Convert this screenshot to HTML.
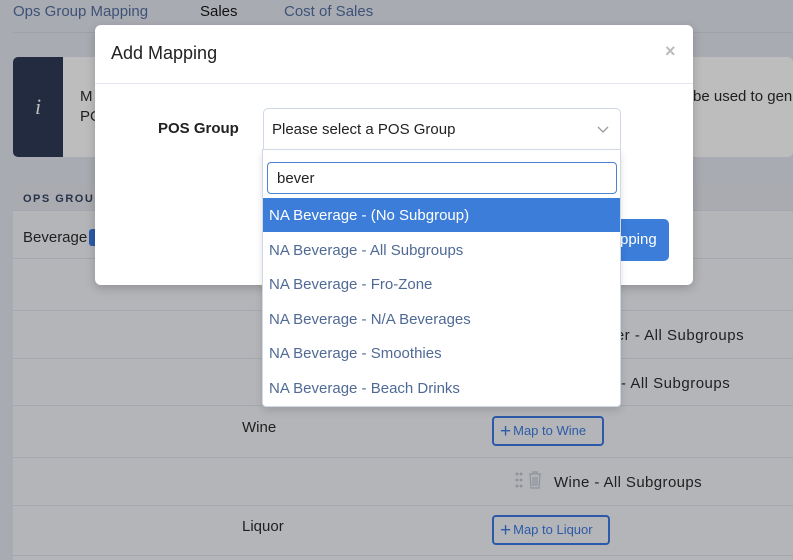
<!DOCTYPE html>
<html><head><style>
*{box-sizing:border-box;margin:0;padding:0}
html,body{width:793px;height:560px;overflow:hidden}
body{position:relative;font-family:"Liberation Sans",sans-serif;background:#a9abb2;color:#1f1f1f}
.abs{position:absolute}
.t{font-size:15px;white-space:nowrap}
.row{position:absolute;left:13px;width:780px;border-top:1px solid #a4a7ae;background:#b4b5b8}
.btn{position:absolute;border:2px solid #2c5aa8;border-radius:4px;color:#2c5aa8;font-size:13px;padding:0 6px;height:30px;line-height:26px;background:#b4b5b8;white-space:nowrap}
.btn b{font-weight:normal;font-size:19px;vertical-align:-2px;margin-right:2px}
.opt{position:absolute;left:0;width:100%;height:34px;padding:9px 6px;font-size:15px;color:#4f6a95;white-space:nowrap}
</style></head><body>
<div class="abs t" style="left:13px;top:3px;color:#3d5277">Ops Group Mapping</div>
<div class="abs t" style="left:200px;top:3px;color:#111">Sales</div>
<div class="abs t" style="left:284px;top:3px;color:#3d5277">Cost of Sales</div>
<div class="abs" style="left:13px;top:32px;width:780px;height:1px;background:#9ea1a8"></div>
<div class="abs" style="left:13px;top:57px;width:780px;height:100px;background:#bdbdbd;border-radius:5px"></div>
<div class="abs" style="left:13px;top:57px;width:50px;height:100px;background:#222b3f;border-radius:5px 0 0 5px;color:#bdbdbd;font:italic 22px 'Liberation Serif',serif;text-align:center;line-height:100px">i</div>
<div class="abs t" style="left:80px;top:88px">M</div>
<div class="abs t" style="left:80px;top:108px">PO</div>
<div class="abs t" style="left:693px;top:88px">be used to gen</div>
<div class="abs" style="left:13px;top:183px;width:780px;height:27px;background:#a9abb0"></div>
<div class="abs" style="left:23px;top:193px;font-size:11px;letter-spacing:1.5px;font-weight:bold;color:#27324a">OPS GROUP</div>
<div class="row" style="top:210px;height:48px"></div>
<div class="abs t" style="left:23px;top:229px">Beverage</div>
<div class="abs" style="left:89px;top:229px;width:8px;height:17px;background:#2c5aa8;border-radius:3px 0 0 3px"></div>
<div class="row" style="top:258px;height:52px"></div>
<div class="row" style="top:310px;height:48px"></div>
<div class="abs t" style="left:607px;top:327px;letter-spacing:.5px">eer - All Subgroups</div>
<div class="abs" style="left:621px;top:358px;width:172px;height:0"></div>
<div class="row" style="top:358px;height:47px"></div>
<div class="abs t" style="left:621px;top:375px;letter-spacing:.5px">- All Subgroups</div>
<div class="row" style="top:405px;height:52px"></div>
<div class="abs t" style="left:242px;top:419px">Wine</div>
<div class="btn" style="left:492px;top:416px;width:112px"><b>+</b>Map to Wine</div>
<div class="row" style="top:457px;height:48px"></div>
<div class="abs" style="left:515px;top:471px;width:8px;height:18px;background:radial-gradient(circle,#8e939b 1.3px,transparent 1.6px) 0 0/4px 6px"></div>
<svg class="abs" style="left:528px;top:471px" width="14" height="18" viewBox="0 0 14 18"><path d="M1 3h12M5 3V1h4v2M2 3l1 14h8l1-14M5 6v9M7 6v9M9 6v9" stroke="#8e939b" fill="none" stroke-width="1.2"/></svg>
<div class="abs t" style="left:554px;top:474px;letter-spacing:.4px">Wine - All Subgroups</div>
<div class="row" style="top:505px;height:50px"></div>
<div class="abs t" style="left:242px;top:518px">Liquor</div>
<div class="btn" style="left:492px;top:515px;width:118px"><b>+</b>Map to Liquor</div>
<div class="row" style="top:555px;height:10px"></div>

<div class="abs" style="left:95px;top:25px;width:598px;height:260px;background:#fff;border-radius:6px;box-shadow:0 3px 10px rgba(0,0,0,.2)">
 <div class="abs" style="left:16px;top:18px;font-size:18px;color:#222">Add Mapping</div>
 <div class="abs" style="left:570px;top:16px;font-size:18px;font-weight:bold;color:#bbb">×</div>
 <div class="abs" style="left:0;top:58px;width:598px;height:1px;background:#e3e7ee"></div>
 <div class="abs" style="left:63px;top:95px;font-size:15px;font-weight:bold;color:#222">POS Group</div>
 <div class="abs" style="left:485px;top:194px;width:89px;height:42px;background:#3b7dd8;border-radius:5px;color:#fff;font-size:15px;padding:12px 0 0 40px">pping</div>
</div>
<div class="abs" style="left:263px;top:108px;width:358px;height:42px;border:1px solid #cfd9e6;border-radius:5px 5px 0 0;background:#fff;font-size:15px;color:#222;padding:12px 8px">Please select a POS Group
 <svg class="abs" style="left:333px;top:17px" width="12" height="8"><path d="M1 1l5 5 5-5" stroke="#999" fill="none" stroke-width="1.3"/></svg></div>
<div class="abs" style="left:262px;top:149px;width:359px;height:258px;background:#fff;border:1px solid #cfd9e6;border-radius:0 0 4px 4px;box-shadow:0 4px 8px rgba(0,0,0,.12)">
 <div class="abs" style="left:4px;top:12px;width:350px;height:32px;border:1px solid #4a82d4;border-radius:4px;font-size:15px;padding:7px 9px;color:#222">bever</div>
 <div class="opt" style="top:48px;background:#3b7dd8;color:#fff">NA Beverage - (No Subgroup)</div>
 <div class="opt" style="top:83px">NA Beverage - All Subgroups</div>
 <div class="opt" style="top:117px">NA Beverage - Fro-Zone</div>
 <div class="opt" style="top:152px">NA Beverage - N/A Beverages</div>
 <div class="opt" style="top:186px">NA Beverage - Smoothies</div>
 <div class="opt" style="top:221px">NA Beverage - Beach Drinks</div>
</div>
</body></html>
